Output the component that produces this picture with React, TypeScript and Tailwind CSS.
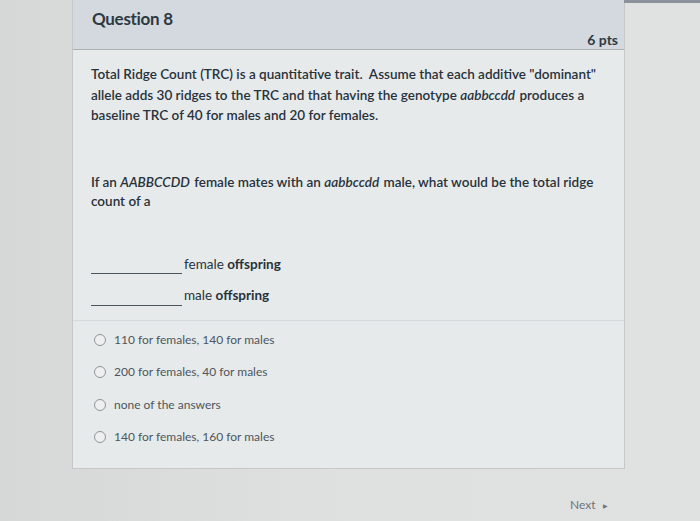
import React from "react";

const answers = [
  "110 for females, 140 for males",
  "200 for females, 40 for males",
  "none of the answers",
  "140 for females, 160 for males",
];

function Blank({ who }: { who: string }) {
  return (
    <div className="flex items-end">
      <span className="w-[91px] border-b border-[#4a5560] h-[14px]" />
      <span className="ml-[2px] font-normal">
        {who} <b>offspring</b>
      </span>
    </div>
  );
}

export default function App() {
  return (
    <div
      className="w-[700px] h-[521px] overflow-hidden bg-gradient-to-r from-[#d6d8d8] via-[#dfe1e1] to-[#e0e2e2] relative"
      style={{ fontFamily: "Lato, 'Open Sans', sans-serif" }}
    >
      <div className="absolute left-[380px] top-0 w-[320px] h-[3px] bg-[#8b9299]" />
      <div className="ml-[72px] w-[553px] border-x border-b border-[#c4c8ca] bg-[#e7eaeb]">
        <div className="h-[50px] bg-[#d4d9df] border-b border-[#a9b0b6] px-[19px] relative">
          <div className="pt-[6px] text-[17px] font-bold text-[#2d3942] tracking-[-0.3px]">
            Question 8
          </div>
          <div className="absolute right-[6px] top-[29px] text-[14px] font-bold text-[#2d3942]">
            6 pts
          </div>
        </div>
        <div className="px-[18px] pt-[14px] text-[13.5px] leading-[20.5px] text-[#27323b] font-semibold">
          <p className="w-[525px]">
            <span>Total Ridge Count (TRC) is a quantitative trait.&nbsp; Assume that each additive "dominant"</span>
            <br />
            <span>allele adds 30 ridges to the TRC and that having the genotype </span>
            <i className="pr-[1px]">aabbccdd</i>
            <span> produces a</span>
            <br />
            <span>baseline TRC of 40 for males and 20 for females.</span>
          </p>
          <p className="mt-[47px] w-[505px] leading-[19px]">
            <span>If an </span>
            <i className="pr-[1px]">AABBCCDD</i>
            <span> female mates with an </span>
            <i className="pr-[1px]">aabbccdd</i>
            <span> male, what would be the total ridge</span>
            <br />
            <span>count of a</span>
          </p>
          <div className="mt-[43px] flex flex-col gap-[11px]">
            <Blank who="female" />
            <Blank who="male" />
          </div>
        </div>
        <div className="mt-[14px] border-t border-[#d6dadc] pb-[17px]">
          {answers.map((a) => (
            <div key={a} className="h-[32.5px] flex items-center pl-[21px] pt-[6px]">
              <span className="w-[12px] h-[12px] rounded-full border border-[#8e9598] bg-[#eef0f0]" />
              <span className="ml-[8px] text-[12px] text-[#4d565c]">{a}</span>
            </div>
          ))}
        </div>
      </div>
      <div className="absolute left-[570px] top-[496px] flex items-center text-[12px] text-[#6d7479]">
        Next
        <span className="ml-[7px] text-[6px]">▶</span>
      </div>
    </div>
  );
}
